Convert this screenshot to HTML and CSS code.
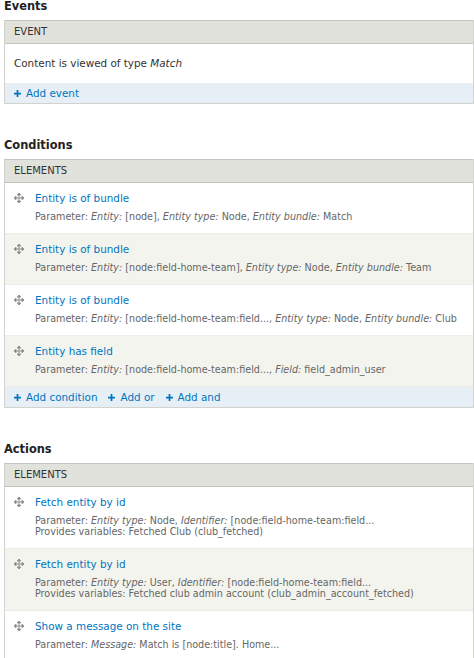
FILE: index.html
```html
<!DOCTYPE html>
<html lang="en">
<head>
<meta charset="utf-8">
<title>Rules</title>
<link rel="stylesheet" href="styles.css">
</head>
<body>
<section class="block">
  <h2 class="block-title">Events</h2>
  <div class="panel">
    <div class="panel-head">Event</div>
    <div class="plain-row">Content is viewed of type <em>Match</em></div>
    <div class="panel-foot">
      <a class="add" href="#"><svg class="plus" viewBox="0 0 8 8"><path d="M3 0h2v3h3v2H5v3H3V5H0V3h3z"/></svg>Add event</a>
    </div>
  </div>
</section>

<section class="block">
  <h2 class="block-title">Conditions</h2>
  <div class="panel">
    <div class="panel-head">Elements</div>
    <div class="item">
      <svg class="handle" viewBox="0 0 10 10"><path d="M5 1.5v7M1.5 5h7"/><polygon points="5,0 3.3,2 6.7,2"/><polygon points="5,10 3.3,8 6.7,8"/><polygon points="0,5 2,3.3 2,6.7"/><polygon points="10,5 8,3.3 8,6.7"/></svg>
      <div class="item-body">
        <a class="item-title" href="#">Entity is of bundle</a>
        <div class="item-desc">Parameter: <em>Entity:</em> [node], <em>Entity type:</em> Node, <em>Entity bundle:</em> Match</div>
      </div>
    </div>
    <div class="item item-alt">
      <svg class="handle" viewBox="0 0 10 10"><path d="M5 1.5v7M1.5 5h7"/><polygon points="5,0 3.3,2 6.7,2"/><polygon points="5,10 3.3,8 6.7,8"/><polygon points="0,5 2,3.3 2,6.7"/><polygon points="10,5 8,3.3 8,6.7"/></svg>
      <div class="item-body">
        <a class="item-title" href="#">Entity is of bundle</a>
        <div class="item-desc">Parameter: <em>Entity:</em> [node:field-home-team], <em>Entity type:</em> Node, <em>Entity bundle:</em> Team</div>
      </div>
    </div>
    <div class="item">
      <svg class="handle" viewBox="0 0 10 10"><path d="M5 1.5v7M1.5 5h7"/><polygon points="5,0 3.3,2 6.7,2"/><polygon points="5,10 3.3,8 6.7,8"/><polygon points="0,5 2,3.3 2,6.7"/><polygon points="10,5 8,3.3 8,6.7"/></svg>
      <div class="item-body">
        <a class="item-title" href="#">Entity is of bundle</a>
        <div class="item-desc">Parameter: <em>Entity:</em> [node:field-home-team:field..., <em>Entity type:</em> Node, <em>Entity bundle:</em> Club</div>
      </div>
    </div>
    <div class="item item-alt">
      <svg class="handle" viewBox="0 0 10 10"><path d="M5 1.5v7M1.5 5h7"/><polygon points="5,0 3.3,2 6.7,2"/><polygon points="5,10 3.3,8 6.7,8"/><polygon points="0,5 2,3.3 2,6.7"/><polygon points="10,5 8,3.3 8,6.7"/></svg>
      <div class="item-body">
        <a class="item-title" href="#">Entity has field</a>
        <div class="item-desc">Parameter: <em>Entity:</em> [node:field-home-team:field..., <em>Field:</em> field_admin_user</div>
      </div>
    </div>
    <div class="panel-foot">
      <a class="add" href="#"><svg class="plus" viewBox="0 0 8 8"><path d="M3 0h2v3h3v2H5v3H3V5H0V3h3z"/></svg>Add condition</a>
      <a class="add" href="#"><svg class="plus" viewBox="0 0 8 8"><path d="M3 0h2v3h3v2H5v3H3V5H0V3h3z"/></svg>Add or</a>
      <a class="add" href="#"><svg class="plus" viewBox="0 0 8 8"><path d="M3 0h2v3h3v2H5v3H3V5H0V3h3z"/></svg>Add and</a>
    </div>
  </div>
</section>

<section class="block">
  <h2 class="block-title">Actions</h2>
  <div class="panel">
    <div class="panel-head">Elements</div>
    <div class="item">
      <svg class="handle" viewBox="0 0 10 10"><path d="M5 1.5v7M1.5 5h7"/><polygon points="5,0 3.3,2 6.7,2"/><polygon points="5,10 3.3,8 6.7,8"/><polygon points="0,5 2,3.3 2,6.7"/><polygon points="10,5 8,3.3 8,6.7"/></svg>
      <div class="item-body">
        <a class="item-title" href="#">Fetch entity by id</a>
        <div class="item-desc">Parameter: <em>Entity type:</em> Node, <em>Identifier:</em> [node:field-home-team:field...<br>Provides variables: Fetched Club (club_fetched)</div>
      </div>
    </div>
    <div class="item item-alt">
      <svg class="handle" viewBox="0 0 10 10"><path d="M5 1.5v7M1.5 5h7"/><polygon points="5,0 3.3,2 6.7,2"/><polygon points="5,10 3.3,8 6.7,8"/><polygon points="0,5 2,3.3 2,6.7"/><polygon points="10,5 8,3.3 8,6.7"/></svg>
      <div class="item-body">
        <a class="item-title" href="#">Fetch entity by id</a>
        <div class="item-desc">Parameter: <em>Entity type:</em> User, <em>Identifier:</em> [node:field-home-team:field...<br>Provides variables: Fetched club admin account (club_admin_account_fetched)</div>
      </div>
    </div>
    <div class="item">
      <svg class="handle" viewBox="0 0 10 10"><path d="M5 1.5v7M1.5 5h7"/><polygon points="5,0 3.3,2 6.7,2"/><polygon points="5,10 3.3,8 6.7,8"/><polygon points="0,5 2,3.3 2,6.7"/><polygon points="10,5 8,3.3 8,6.7"/></svg>
      <div class="item-body">
        <a class="item-title" href="#">Show a message on the site</a>
        <div class="item-desc">Parameter: <em>Message:</em> Match is [node:title]. Home...</div>
      </div>
    </div>
  </div>
</section>
</body>
</html>
```

FILE: styles.css
```css
html, body {
  margin: 0;
  padding: 0;
  background: #ffffff;
}

body {
  padding: 0 0 0 4px;
  font-family: "DejaVu Sans", Verdana, sans-serif;
  font-size: 10.4px;
  color: #333333;
}

.block + .block {
  margin-top: 35px;
}

.block-title {
  margin: 0 0 8px;
  font-size: 11.4px;
  line-height: 12px;
  font-weight: bold;
  color: #222222;
}

.panel {
  border: 1px solid #d2d2ce;
  border-top: 0;
}

.panel-head {
  background: #e1e2dc;
  border-top: 1px solid #c4c4bf;
  border-bottom: 1px solid #c4c4bf;
  padding: 4px 9px;
  line-height: 14px;
  font-size: 10px;
  text-transform: uppercase;
  color: #333333;
}

.plain-row {
  padding: 12px 9px 13px;
  line-height: 14px;
  background: #ffffff;
}

.item {
  display: flex;
  align-items: flex-start;
  gap: 11px;
  padding: 8px 9px 11px;
  border-bottom: 1px solid #ecece8;
  background: #ffffff;
}

.item-alt {
  background: #f3f4ee;
}

.handle {
  width: 10px;
  height: 10px;
  margin-top: 2px;
  flex: none;
  fill: #8f8f8f;
  stroke: #8f8f8f;
  stroke-width: 1;
}

.item-body {
  display: flex;
  flex-direction: column;
  gap: 6px;
  min-width: 0;
}

.item-title {
  line-height: 14px;
  color: #0074bd;
  text-decoration: none;
  white-space: nowrap;
}

.item-desc {
  font-size: 9.6px;
  line-height: 11px;
  color: #666666;
  white-space: nowrap;
}

.panel-foot {
  display: flex;
  gap: 11px;
  padding: 3px 9px;
  line-height: 14px;
  background: #e6eff6;
}

.add {
  display: flex;
  align-items: center;
  gap: 5px;
  color: #0074bd;
  text-decoration: none;
}

.plus {
  width: 7px;
  height: 7px;
  fill: #0074bd;
}
```
